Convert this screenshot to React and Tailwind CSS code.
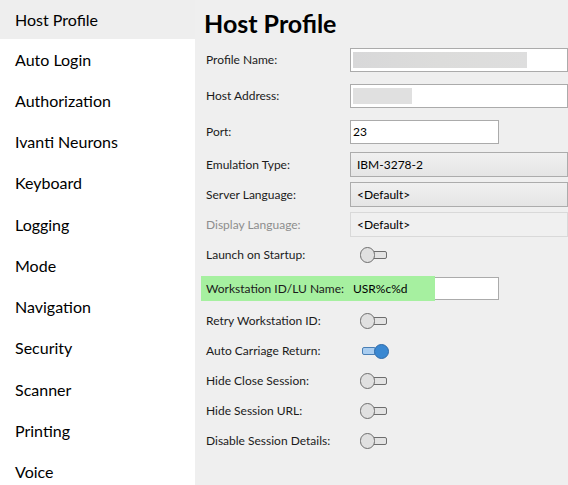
import React from "react";

const navItems = [
  "Host Profile",
  "Auto Login",
  "Authorization",
  "Ivanti Neurons",
  "Keyboard",
  "Logging",
  "Mode",
  "Navigation",
  "Security",
  "Scanner",
  "Printing",
  "Voice",
];

const Toggle = ({ on }) => (
  <div className="relative w-[30px] h-[16px]">
    {on ? (
      <>
        <div className="absolute left-[2px] top-[4px] w-[14px] h-[8px] rounded-[2px] border border-[#4a7fb5] bg-[#a9cdf0]" />
        <div className="absolute left-[14px] top-[1px] w-[15px] h-[15px] rounded-full border border-[#2f6aa8] bg-[#3a88d2]" />
      </>
    ) : (
      <>
        <div className="absolute left-[12px] top-[4px] w-[15px] h-[8px] rounded-[2px] border border-[#6e6e6e] bg-[#e3e3e3]" />
        <div className="absolute left-[0px] top-[0px] w-[15px] h-[16px] rounded-full border border-[#6e6e6e] bg-[#e0e0e0]" />
      </>
    )}
  </div>
);

const Label = ({ children, muted }) => (
  <div
    className={`w-[144px] shrink-0 text-[12px] ${
      muted ? "text-[#8d8d8d]" : "text-[#1b1b1b]"
    }`}
  >
    {children}
  </div>
);

const TextBox = ({ width, children }) => (
  <div
    className={`${width} h-full border border-[#ababab] bg-white flex items-center px-[2px] text-[12px] text-black`}
  >
    {children}
  </div>
);

const Select = ({ value, disabled }) => (
  <div
    className={`w-[240px] h-full flex items-center px-[6px] text-[12px] text-black ${
      disabled
        ? "border border-[#d9d9d9] bg-[#f0f0f0]"
        : "border border-[#acacac] bg-[linear-gradient(to_bottom,#f0f0f0,#e5e5e5)]"
    }`}
  >
    {value}
  </div>
);

export default function App() {
  return (
    <div
      className="flex w-[568px] h-[485px] overflow-hidden bg-[#efefef]"
      style={{ fontFamily: "Lato, 'Open Sans', sans-serif" }}
    >
      {/* Sidebar */}
      <div className="w-[195px] shrink-0 bg-white flex flex-col">
        {navItems.map((item, i) => (
          <div
            key={item}
            className={`shrink-0 flex items-center pl-[15px] text-[16px] text-black ${
              i === 0 ? "bg-[#eeeeee] h-[39px]" : "h-[41.25px]"
            }`}
          >
            {item}
          </div>
        ))}
      </div>

      {/* Content */}
      <div className="flex-1 flex flex-col pl-[11px] overflow-hidden">
        <div className="h-[48px] shrink-0 flex items-center -ml-[2px] pb-[1px]">
          <h1 className="text-[25px] font-bold leading-none text-black">
            Host Profile
          </h1>
        </div>

        <div className="h-[24px] flex items-center mb-[12px]">
          <Label>Profile Name:</Label>
          <TextBox width="w-[240px]">
            <div className="h-[16px] w-[174px] bg-[linear-gradient(to_right,#d8d8d9,#dcdcdb,#dedede)]" />
          </TextBox>
        </div>

        <div className="h-[24px] flex items-center mb-[12px]">
          <Label>Host Address:</Label>
          <TextBox width="w-[240px]">
            <div className="h-[16px] w-[59px] bg-[#e0e0e0]" />
          </TextBox>
        </div>

        <div className="h-[24px] flex items-center mb-[8px]">
          <Label>Port:</Label>
          <TextBox width="w-[149px]">23</TextBox>
        </div>

        <div className="h-[25px] flex items-center mb-[5px]">
          <Label>Emulation Type:</Label>
          <Select value="IBM-3278-2" />
        </div>

        <div className="h-[25px] flex items-center mb-[5px]">
          <Label>Server Language:</Label>
          <Select value="<Default>" />
        </div>

        <div className="h-[25px] flex items-center mb-[3px]">
          <Label muted>Display Language:</Label>
          <Select value="<Default>" disabled />
        </div>

        <div className="h-[30px] flex items-center mb-[6px]">
          <Label>Launch on Startup:</Label>
          <div className="pl-[10px]">
            <Toggle />
          </div>
        </div>

        <div className="h-[25px] flex items-center mb-[4.5px] -ml-[5px]">
          <div className="w-[149px] h-full bg-[#a6f0a0] pl-[5px] flex items-center text-[12px] text-[#1b1b1b]">
            Workstation ID/LU Name:
          </div>
          <div className="relative w-[149px] h-[23px] border border-[#ababab] bg-white flex items-center text-[12px] text-black">
            <div className="absolute -left-[1px] -top-[2px] w-[85px] h-[25px] bg-[#a6f0a0]" />
            <span className="relative pl-[2px]">USR%c%d</span>
          </div>
        </div>

        {[
          ["Retry Workstation ID:", false],
          ["Auto Carriage Return:", true],
          ["Hide Close Session:", false],
          ["Hide Session URL:", false],
          ["Disable Session Details:", false],
        ].map(([label, on]) => (
          <div key={label} className="h-[30px] shrink-0 flex items-center">
            <Label>{label}</Label>
            <div className="pl-[10px]">
              <Toggle on={on} />
            </div>
          </div>
        ))}
      </div>
    </div>
  );
}
